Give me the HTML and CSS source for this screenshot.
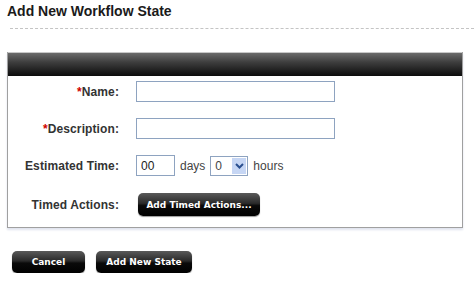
FILE: index.html
```html
<!DOCTYPE html>
<html lang="en">
<head>
  <meta charset="UTF-8">
  <title>Add New Workflow State</title>
  <link rel="stylesheet" href="styles.css">
</head>
<body>
  <h1 class="title">Add New Workflow State</h1>
  <div class="divider"></div>

  <div class="panel">
    <div class="panel-head"></div>
    <div class="panel-body">
      <div class="row">
        <label class="label"><span class="req">*</span>Name:</label>
        <input class="text wide" type="text">
      </div>
      <div class="row">
        <label class="label"><span class="req">*</span>Description:</label>
        <input class="text wide" type="text">
      </div>
      <div class="row">
        <label class="label">Estimated Time:</label>
        <div class="time">
          <input class="text short" type="text" value="00">
          <span>days</span>
          <div class="select">
            <span class="select-val">0</span>
            <span class="select-btn">
              <svg width="9" height="6" viewBox="0 0 9 6"><path d="M1 1 L4.5 4.5 L8 1" fill="none" stroke="#2a4f8f" stroke-width="2"/></svg>
            </span>
          </div>
          <span>hours</span>
        </div>
      </div>
      <div class="row row-btn">
        <label class="label">Timed Actions:</label>
        <button class="btn btn-timed">Add Timed Actions...</button>
      </div>
    </div>
  </div>

  <div class="actions">
    <button class="btn btn-cancel">Cancel</button>
    <button class="btn btn-add">Add New State</button>
  </div>
</body>
</html>
```

FILE: styles.css
```css
body {
  margin: 0;
  background: #fff;
  font-family: "Liberation Sans", Arial, sans-serif;
  color: #222;
}

.title {
  margin: 0;
  padding: 3px 0 0 7px;
  height: 19px;
  font-size: 14px;
  font-weight: bold;
  color: #1a1a1a;
}

.divider {
  margin: 6px 0 0 10px;
  border-top: 1px dashed #c4c4c4;
}

.panel {
  margin: 23px 0 0 7px;
  width: 454px;
  border: 1px solid #a0a0a0;
  border-top: 0;
  box-shadow: 0 2px 2px #e0e4ee;
}

.panel-head {
  height: 23px;
  border-top: 1px solid #c8c8c8;
  background: linear-gradient(180deg, #6b6b6b 0%, #3e3e3e 40%, #1c1c1c 80%, #0c0c0c 100%);
}

.panel-body {
  padding: 5px 0 11px 0;
}

.row {
  display: flex;
  align-items: center;
  height: 21px;
  margin-bottom: 16px;
}

.row-btn {
  margin-top: 17px;
  height: 23px;
  margin-bottom: 0;
}

.label {
  width: 111px;
  text-align: right;
  font-size: 12px;
  font-weight: bold;
  color: #333;
  letter-spacing: 0.1px;
}

.req {
  color: #d00000;
}

.text {
  box-sizing: border-box;
  height: 21px;
  margin: 0 0 0 17px;
  border: 1px solid #8ea3c0;
  font-family: "Liberation Sans", Arial, sans-serif;
  font-size: 12px;
  padding: 2px 4px;
  color: #222;
}

.wide {
  width: 199px;
}

.short {
  width: 39px;
}

.time {
  display: flex;
  align-items: center;
  font-size: 12px;
  color: #444;
}

.time span {
  margin-left: 5px;
}

.select {
  display: flex;
  box-sizing: border-box;
  width: 38px;
  height: 20px;
  margin-left: 5px;
  border: 1px solid #8ea3c0;
}

.time .select-val {
  flex: 1;
  margin-left: 0;
  padding: 2px 4px;
}

.time .select-btn {
  width: 14px;
  margin: 1px;
  background: #c6d6f4;
  display: flex;
  align-items: center;
  justify-content: center;
}

.btn {
  border: 0;
  border-radius: 5px;
  background: linear-gradient(180deg, #5a5a5a 0%, #2a2a2a 45%, #0a0a0a 55%, #000 100%);
  color: #fff;
  font-family: "DejaVu Sans", Verdana, sans-serif;
  font-size: 9px;
  font-weight: bold;
  height: 23px;
  padding: 0;
  box-shadow: 0 1px 1px #999;
}

.btn-timed {
  width: 122px;
  margin-left: 19px;
}

.actions {
  display: flex;
  gap: 11px;
  margin: 23px 0 0 12px;
}

.btn-cancel {
  width: 73px;
  height: 22px;
}

.btn-add {
  width: 96px;
  height: 22px;
}
```
